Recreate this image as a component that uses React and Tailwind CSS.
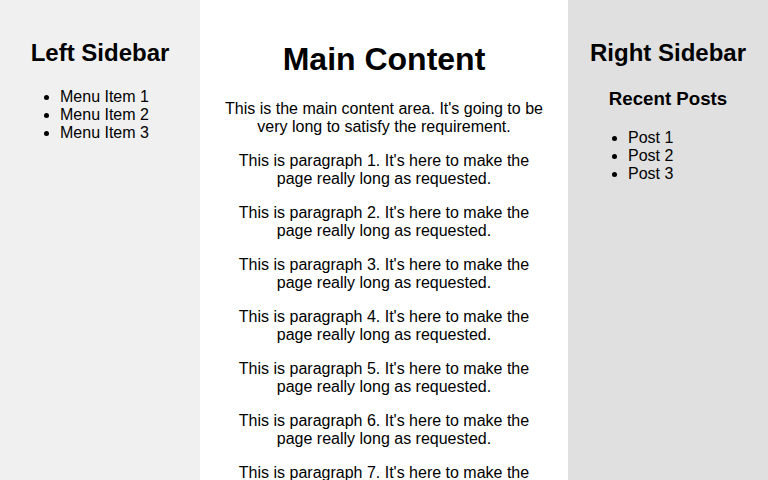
const menuItems = ['Menu Item 1', 'Menu Item 2', 'Menu Item 3'];
const posts = ['Post 1', 'Post 2', 'Post 3'];
const paragraphs = Array.from({ length: 20 }, (_, i) => i + 1);

export default function App() {
  return (
    <div className="flex min-h-screen text-black text-base leading-[normal] font-['Liberation_Sans',Arial,sans-serif]">
      {/* Left sidebar */}
      <aside className="w-[200px] shrink-0 bg-[#f0f0f0] p-5 text-center">
        <h2 className="text-2xl font-bold mt-[16.5px] mb-[19.92px]">Left Sidebar</h2>
        <ul className="list-disc pl-10 text-left">
          {menuItems.map((item) => (
            <li key={item}>{item}</li>
          ))}
        </ul>
      </aside>

      {/* Main content */}
      <main className="flex-1 bg-white p-5 text-center">
        <h1 className="text-[32px] font-bold mt-[21.44px] mb-[21.44px]">Main Content</h1>
        <p className="mb-4">This is the main content area. It's going to be very long to satisfy the requirement.</p>
        {paragraphs.map((n) => (
          <p key={n} className="my-4">
            This is paragraph {n}. It's here to make the page really long as requested.
          </p>
        ))}
      </main>

      {/* Right sidebar */}
      <aside className="w-[200px] shrink-0 bg-[#e0e0e0] p-5 text-center">
        <h2 className="text-2xl font-bold mt-[16.5px] mb-[19.92px]">Right Sidebar</h2>
        <h3 className="text-[18.72px] font-bold mb-[18.72px]">Recent Posts</h3>
        <ul className="list-disc pl-10 text-left">
          {posts.map((post) => (
            <li key={post}>{post}</li>
          ))}
        </ul>
      </aside>
    </div>
  );
}
